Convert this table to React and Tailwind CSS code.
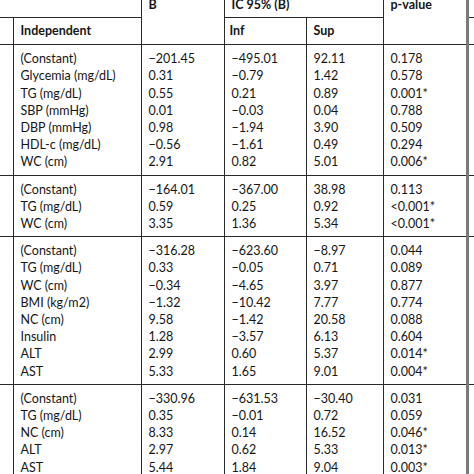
import React from "react";

const groups = [
  [
    ["(Constant)", "−201.45", "−495.01", "92.11", "0.178"],
    ["Glycemia (mg/dL)", "0.31", "−0.79", "1.42", "0.578"],
    ["TG (mg/dL)", "0.55", "0.21", "0.89", "0.001*"],
    ["SBP (mmHg)", "0.01", "−0.03", "0.04", "0.788"],
    ["DBP (mmHg)", "0.98", "−1.94", "3.90", "0.509"],
    ["HDL-c (mg/dL)", "−0.56", "−1.61", "0.49", "0.294"],
    ["WC (cm)", "2.91", "0.82", "5.01", "0.006*"],
  ],
  [
    ["(Constant)", "−164.01", "−367.00", "38.98", "0.113"],
    ["TG (mg/dL)", "0.59", "0.25", "0.92", "<0.001*"],
    ["WC (cm)", "3.35", "1.36", "5.34", "<0.001*"],
  ],
  [
    ["(Constant)", "−316.28", "−623.60", "−8.97", "0.044"],
    ["TG (mg/dL)", "0.33", "−0.05", "0.71", "0.089"],
    ["WC (cm)", "−0.34", "−4.65", "3.97", "0.877"],
    ["BMI (kg/m2)", "−1.32", "−10.42", "7.77", "0.774"],
    ["NC (cm)", "9.58", "−1.42", "20.58", "0.088"],
    ["Insulin", "1.28", "−3.57", "6.13", "0.604"],
    ["ALT", "2.99", "0.60", "5.37", "0.014*"],
    ["AST", "5.33", "1.65", "9.01", "0.004*"],
  ],
  [
    ["(Constant)", "−330.96", "−631.53", "−30.40", "0.031"],
    ["TG (mg/dL)", "0.35", "−0.01", "0.72", "0.059"],
    ["NC (cm)", "8.33", "0.14", "16.52", "0.046*"],
    ["ALT", "2.97", "0.62", "5.33", "0.013*"],
    ["AST", "5.44", "1.84", "9.04", "0.003*"],
  ],
];

const line = "border-[#2a2a2a]";
const cell = `border ${line} align-top px-[7px] pt-[5px] pb-[4px] leading-[17.2px] whitespace-nowrap`;
const edge = "border-l-[3px] border-l-[#7a7a7a]";

export default function App() {
  return (
    <div
      className="w-[474px] h-[474px] overflow-hidden bg-white text-[#161616] text-[12.5px]"
      style={{ fontFamily: "Lato, 'Open Sans', sans-serif" }}
    >
      <table className="-mt-[14px] border-collapse table-fixed w-[500px]">
        <colgroup>
          <col className="w-[13px]" />
          <col className="w-[128px]" />
          <col className="w-[83px]" />
          <col className="w-[82px]" />
          <col className="w-[77px]" />
          <col className="w-[84px]" />
          <col className="w-[33px]" />
        </colgroup>
        <thead className="font-bold">
          <tr className="h-[30px]">
            <td colSpan={2} className={`border-b ${line}`} />
            <td rowSpan={2} className={`${cell} pt-[9px]`}>B</td>
            <td colSpan={2} className={`${cell} pt-[9px]`}>IC 95% (B)</td>
            <td rowSpan={2} className={`${cell} pt-[9px]`}>p-value</td>
            <td className={`border-b ${line} ${edge}`} />
          </tr>
          <tr className="h-[27px]">
            <td className={`border-r border-b ${line}`} />
            <td className={`border ${line} px-[7px] align-middle`}>Independent</td>
            <td className={`border ${line} px-[5px] align-middle`}>Inf</td>
            <td className={`border ${line} px-[7px] align-middle`}>Sup</td>
            <td className={`border-b ${line} ${edge}`} />
          </tr>
        </thead>
        <tbody>
          {groups.map((g, i) => (
            <tr key={i}>
              <td className={`border-r border-b ${line}`} />
              {[0, 1, 2, 3, 4].map((c) => (
                <td key={c} className={`${cell} ${c === 2 ? "px-[5px]" : ""}`}>
                  {g.map((r, j) => (
                    <div key={j}>{r[c]}</div>
                  ))}
                </td>
              ))}
              <td className={`border-b ${line} ${edge}`} />
            </tr>
          ))}
        </tbody>
      </table>
    </div>
  );
}
